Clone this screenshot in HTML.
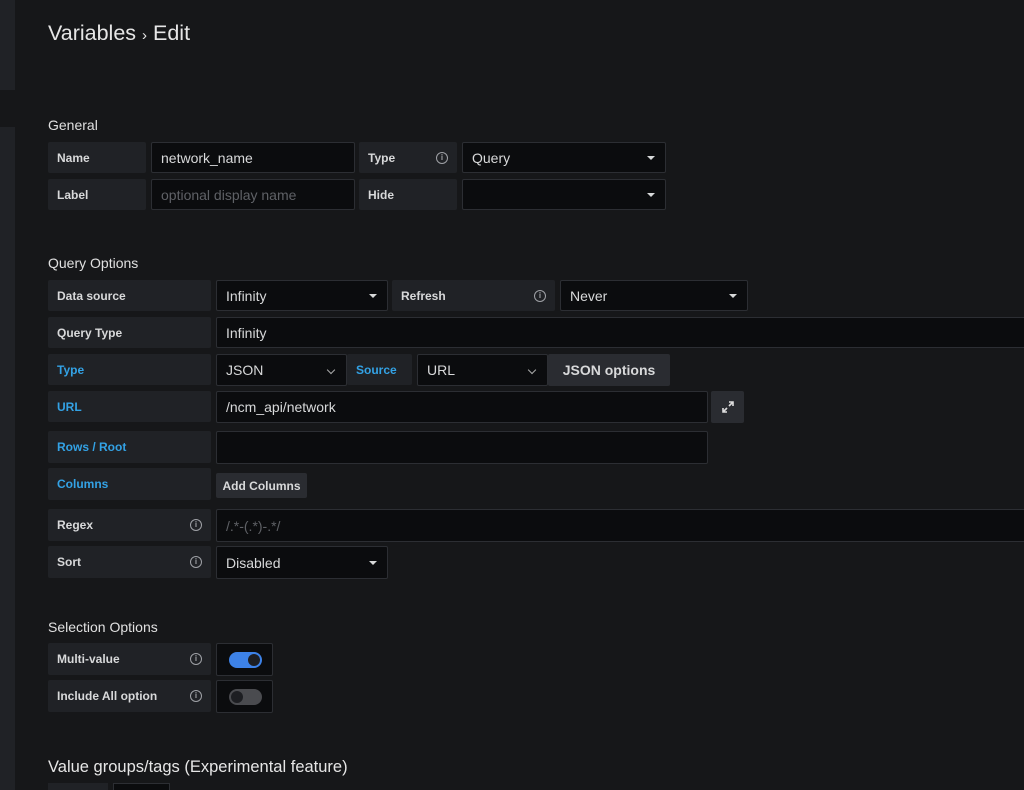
<!DOCTYPE html>
<html><head><style>
*{box-sizing:border-box;margin:0;padding:0}
html,body{width:1024px;height:790px;overflow:hidden}
body{background:#161719;font-family:"Liberation Sans",sans-serif;color:#d8d9da;position:relative}
.a{position:absolute}
.side{left:0;width:15px;background:#202226}
.h{font-size:14px;color:#e0e0e0}
.lb{position:absolute;background:#202226;border-radius:2px;font-size:12px;font-weight:bold;color:#d8d9da;padding-left:9px;display:flex;align-items:center}
.blue{color:#33a2e5}
.in{position:absolute;background:#0b0c0e;border:1px solid #2c2e33;border-radius:2px;font-size:14px;color:#d8d9da;padding-left:9px;display:flex;align-items:center}
.ph{color:#5f6166}
.caret{position:absolute;right:10px;top:50%;margin-top:-2px;width:0;height:0;border-left:4px solid transparent;border-right:4px solid transparent;border-top:4px solid #d8d9da}
.chev{position:absolute;right:12px;top:12px;width:6px;height:6px;border-right:1px solid #aaa;border-bottom:1px solid #aaa;transform:rotate(45deg)}
.info{position:absolute;right:9px;top:50%;margin-top:-6px;width:12px;height:12px;border:1px solid #9fa1a6;border-radius:50%;font-size:8px;color:#9fa1a6;text-align:center;line-height:10px;font-weight:bold}
.btn{position:absolute;background:#2a2c31;border-radius:2px;color:#d8d9da;font-weight:bold;display:flex;align-items:center;justify-content:center}
</style></head><body>
<div class="a side" style="top:0;height:90px"></div>
<div class="a side" style="top:127px;height:663px"></div>
<div class="a" style="left:48px;top:21px;font-size:21.5px;color:#e6e6e6">Variables <span style="font-size:15px">›</span> Edit</div>

<div class="a h" style="left:48px;top:117px">General</div>
<div class="lb" style="left:48px;top:142px;width:98px;height:31px">Name</div>
<div class="in" style="left:151px;top:142px;width:204px;height:31px">network_name</div>
<div class="lb" style="left:359px;top:142px;width:98px;height:31px">Type<span class="info">i</span></div>
<div class="in" style="left:462px;top:142px;width:204px;height:31px">Query<span class="caret"></span></div>
<div class="lb" style="left:48px;top:179px;width:98px;height:31px">Label</div>
<div class="in" style="left:151px;top:179px;width:204px;height:31px"><span class="ph">optional display name</span></div>
<div class="lb" style="left:359px;top:179px;width:98px;height:31px">Hide</div>
<div class="in" style="left:462px;top:179px;width:204px;height:31px"><span class="caret"></span></div>

<div class="a h" style="left:48px;top:255px">Query Options</div>
<div class="lb" style="left:48px;top:280px;width:163px;height:31px">Data source</div>
<div class="in" style="left:216px;top:280px;width:172px;height:31px">Infinity<span class="caret"></span></div>
<div class="lb" style="left:392px;top:280px;width:163px;height:31px">Refresh<span class="info">i</span></div>
<div class="in" style="left:560px;top:280px;width:188px;height:31px">Never<span class="caret"></span></div>
<div class="lb" style="left:48px;top:317px;width:163px;height:31px">Query Type</div>
<div class="in" style="left:216px;top:317px;width:820px;height:31px">Infinity</div>
<div class="lb blue" style="left:48px;top:354px;width:163px;height:31px">Type</div>
<div class="in" style="left:216px;top:354px;width:131px;height:32px">JSON<span class="chev"></span></div>
<div class="lb blue" style="left:347px;top:354px;width:65px;height:31px">Source</div>
<div class="in" style="left:417px;top:354px;width:131px;height:32px">URL<span class="chev"></span></div>
<div class="btn" style="left:548px;top:354px;width:122px;height:32px;font-size:14px">JSON options</div>
<div class="lb blue" style="left:48px;top:391px;width:163px;height:31px">URL</div>
<div class="in" style="left:216px;top:391px;width:492px;height:32px">/ncm_api/network</div>
<div class="btn" style="left:711px;top:391px;width:33px;height:32px"><svg width="12" height="12" viewBox="0 0 12 12"><path d="M7 1h4v4M11 1L7 5M5 11H1V7M1 11l4-4" stroke="#ddd" stroke-width="1.6" fill="none"/></svg></div>
<div class="lb blue" style="left:48px;top:431px;width:163px;height:32px">Rows / Root</div>
<div class="in" style="left:216px;top:431px;width:492px;height:33px"></div>
<div class="lb blue" style="left:48px;top:468px;width:163px;height:32px">Columns</div>
<div class="btn" style="left:216px;top:473px;width:91px;height:25px;font-size:12px">Add Columns</div>
<div class="lb" style="left:48px;top:509px;width:163px;height:32px">Regex<span class="info">i</span></div>
<div class="in" style="left:216px;top:509px;width:820px;height:33px"><span class="ph">/.*-(.*)-.*/</span></div>
<div class="lb" style="left:48px;top:546px;width:163px;height:32px">Sort<span class="info">i</span></div>
<div class="in" style="left:216px;top:546px;width:172px;height:33px">Disabled<span class="caret"></span></div>

<div class="a h" style="left:48px;top:619px">Selection Options</div>
<div class="lb" style="left:48px;top:643px;width:163px;height:32px">Multi-value<span class="info">i</span></div>
<div class="in" style="left:216px;top:643px;width:57px;height:33px"><div class="a" style="left:12px;top:8px;width:33px;height:16px;border-radius:8px;background:#3d82e8"><div class="a" style="right:2px;top:2px;width:12px;height:12px;border-radius:50%;background:#1d1e22"></div></div></div>
<div class="lb" style="left:48px;top:680px;width:163px;height:32px">Include All option<span class="info">i</span></div>
<div class="in" style="left:216px;top:680px;width:57px;height:33px"><div class="a" style="left:12px;top:8px;width:33px;height:16px;border-radius:8px;background:#4a4b4f"><div class="a" style="left:2px;top:2px;width:12px;height:12px;border-radius:50%;background:#1d1e22"></div></div></div>

<div class="a" style="left:48px;top:758px;font-size:16.5px;color:#e6e6e6">Value groups/tags (Experimental feature)</div>
<div class="a" style="left:48px;top:783px;width:60px;height:20px;background:#202226"></div>
<div class="a" style="left:113px;top:783px;width:57px;height:20px;background:#0b0c0e;border:1px solid #2c2e33"></div>
</body></html>
